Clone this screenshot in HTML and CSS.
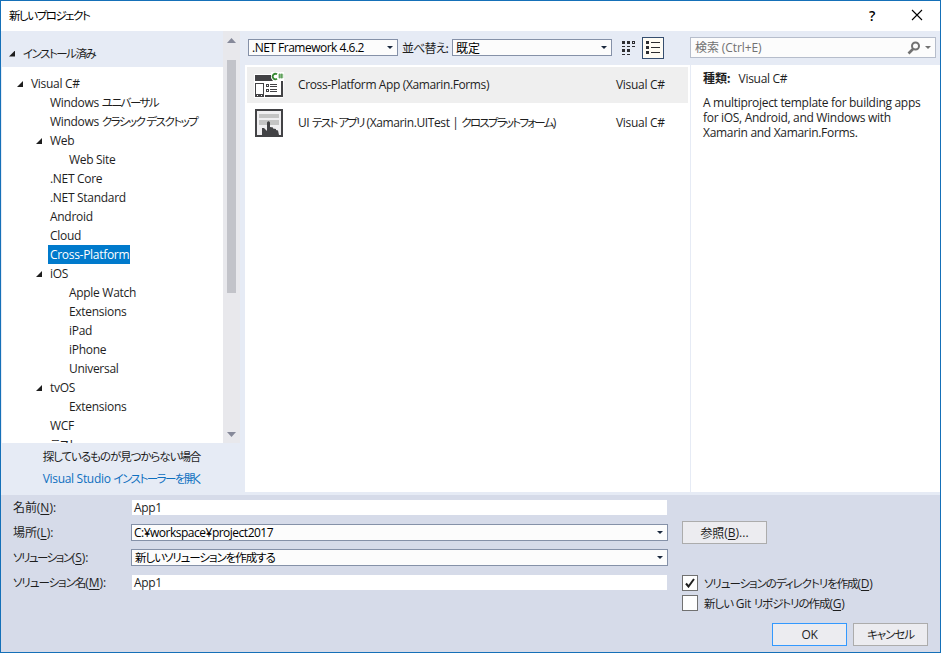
FILE: index.html
```html
<!DOCTYPE html>
<html lang="ja">

<head>
    <meta charset="UTF-8">
    <meta name="viewport" content="width=device-width, initial-scale=1.0">
    <title>新しいプロジェクト</title>
    <link rel="stylesheet" href="styles.css">
</head>

<body>
    <div class="dialog">
        <div class="titlebar">
            <span class="title kana">新しいプロジェクト</span>
            <span class="help">?</span>
            <svg class="close" width="12" height="12" viewBox="0 0 12 12"><path d="M1 1l10 10M11 1L1 11" stroke="#000" stroke-width="1.1"/></svg>
        </div>

        <div class="main">
            <div class="sidebar">
                <div class="browser">
                    <div class="tree-pane">
                        <div class="tree-header"><i class="arrow"></i><span class="kana">インストール済み</span></div>
                        <ul class="tree">
                            <li class="level1"><i class="arrow"></i><span>Visual C#</span></li>
                            <li class="level2"><span>Windows <span class="kana">ユニバーサル</span></span></li>
                            <li class="level2"><span>Windows <span class="kana">クラシック デスクトップ</span></span></li>
                            <li class="level2"><i class="arrow"></i><span>Web</span></li>
                            <li class="level3"><span>Web Site</span></li>
                            <li class="level2"><span>.NET Core</span></li>
                            <li class="level2"><span>.NET Standard</span></li>
                            <li class="level2"><span>Android</span></li>
                            <li class="level2"><span>Cloud</span></li>
                            <li class="level2 selected"><span>Cross-Platform</span></li>
                            <li class="level2"><i class="arrow"></i><span>iOS</span></li>
                            <li class="level3"><span>Apple Watch</span></li>
                            <li class="level3"><span>Extensions</span></li>
                            <li class="level3"><span>iPad</span></li>
                            <li class="level3"><span>iPhone</span></li>
                            <li class="level3"><span>Universal</span></li>
                            <li class="level2"><i class="arrow"></i><span>tvOS</span></li>
                            <li class="level3"><span>Extensions</span></li>
                            <li class="level2"><span>WCF</span></li>
                            <li class="level2"><span class="jp">テスト</span></li>
                        </ul>
                    </div>
                    <div class="scrollbar">
                        <svg width="9" height="5" viewBox="0 0 9 5"><path d="M0 5L4.500 0L9 5z" fill="#868999"/></svg>
                        <div class="track"><div class="thumb"></div></div>
                        <svg width="9" height="5" viewBox="0 0 9 5"><path d="M0 0h9L4.500 5z" fill="#868999"/></svg>
                    </div>
                </div>
                <div class="not-found">
                    <p class="hint jp">探しているものが見つからない場合</p>
                    <a class="link">Visual Studio <span class="kana">インストーラーを開く</span></a>
                </div>
            </div>

            <div class="templates">
                <div class="toolbar">
                    <div class="combo framework"><span>.NET Framework 4.6.2</span><i class="drop"></i></div>
                    <span class="sort-label">並べ替え:</span>
                    <div class="combo sort"><span class="kanji">既定</span><i class="drop"></i></div>
                    <svg class="tiles" width="14" height="14" viewBox="0 0 14 14" fill="#2d2d30" shape-rendering="crispEdges">
                        <path d="M0 0h3v3H0zM5 0h3v3H5zM10 0h3v3h-3zM0 8h3v3H0zM5 8h3v3H5z"/>
                        <path d="M0 5h3v1H0zM5 5h3v1H5zM10 5h3v1h-3zM0 13h3v1H0zM5 13h3v1H5z"/>
                        <path d="M11 1h1v1h-1z" fill="#e6ebf5"/>
                    </svg>
                    <div class="view-list">
                        <svg width="16" height="14" viewBox="0 0 16 14" fill="#2d2d30" shape-rendering="crispEdges">
                            <path d="M1 0h3v3H1zM1 5h3v3H1zM1 10h3v3H1zM6 1h9v1H6zM6 6h9v1H6zM6 11h9v1H6z"/>
                        </svg>
                    </div>
                </div>
                <div class="list">
                    <div class="template active">
                        <svg width="32" height="32" viewBox="0 0 32 32">
                            <path d="M1 5h17V3h13v9l-1 17H1z" fill="#fff"/>
                            <path d="M2 6h16v3l2 3H2z" fill="#424245"/>
                            <path d="M28 12h2v16H12v-2h16z" fill="#424245"/>
                            <path d="M2 14h9v14H2zM3 15v10h7V15zM4 26v1h1v-1zM8 26v1h1v-1z" fill="#424245" fill-rule="evenodd"/>
                            <path d="M13 15h3v3h-3zM14 16v1h1v-1zM17 15h7v1h-7zM17 17h7v1h-7zM13 20h3v3h-3zM14 21v1h1v-1zM17 20h7v1h-7zM17 22h7v1h-7z" fill="#424245" fill-rule="evenodd"/>
                            <path d="M24 5.300A2.700 2.700 0 1 0 24 9.700" fill="none" stroke="#388a34" stroke-width="1.800"/>
                            <path d="M26.800 4.500v5M28.800 4.500v5M25.300 6h5M25.300 8h5" stroke="#388a34" stroke-width=".9"/>
                        </svg>
                        <span class="name">Cross-Platform App (Xamarin.Forms)</span>
                        <span class="lang">Visual C#</span>
                    </div>
                    <div class="template">
                        <svg width="32" height="32" viewBox="0 0 32 32">
                            <path d="M2 2h28v28H2z" fill="#424245"/>
                            <path d="M4 4h24v24H4z" fill="#f0eff1"/>
                            <path d="M6 7h20v4H6zM6 13h20v5H6z" fill="#c4c4c4"/>
                            <path d="M14 28V15.500q1.500-2.500 3 0V20l3 .5v1l3 .5v1l2 .5 1 4.500zM9 28v-7h2l3 3v4z" fill="#424245"/>
                        </svg>
                        <span class="name">UI <span class="kana">テスト アプリ</span> (Xamarin.UITest | <span class="kana">クロスプラットフォーム</span>)</span>
                        <span class="lang">Visual C#</span>
                    </div>
                </div>
            </div>

            <div class="details">
                <div class="search-bar">
                    <div class="search">
                        <span class="placeholder"><span class="kanji">検索</span> (Ctrl+E)</span>
                        <svg width="14" height="14" viewBox="0 0 14 14"><circle cx="8.500" cy="5" r="3.500" fill="none" stroke="#717171" stroke-width="2"/><path d="M6 8L1.500 12.500" stroke="#717171" stroke-width="2.600"/></svg>
                        <i class="drop"></i>
                    </div>
                </div>
                <div class="info">
                    <p class="kind"><b class="kanji">種類:</b><span>Visual C#</span></p>
                    <p class="description">A multiproject template for building apps<br>for iOS, Android, and Windows with<br>Xamarin and Xamarin.Forms.</p>
                </div>
            </div>
        </div>

        <div class="footer">
            <div class="form">
                <label><span class="kanji">名前</span>(<u>N</u>):</label>
                <div class="textbox">App1</div>
                <label><span class="kanji">場所</span>(<u>L</u>):</label>
                <div class="combo path"><span>C:¥workspace¥project2017</span><i class="drop"></i></div>
                <label><span class="kana">ソリューション</span>(<u>S</u>):</label>
                <div class="combo"><span class="jp">新しいソリューションを作成する</span><i class="drop"></i></div>
                <label><span class="jp">ソリューション名</span>(<u>M</u>):</label>
                <div class="textbox">App1</div>
            </div>
            <div class="actions">
                <div class="button browse"><span class="kanji">参照</span>(<u>B</u>)...</div>
                <div class="check">
                    <span class="box"><svg width="10" height="10" viewBox="0 0 10 10"><path d="M1 5.500L3.500 8.500L9 1" fill="none" stroke="#1e1e1e" stroke-width="2"/></svg></span>
                    <span><span class="jp">ソリューションのディレクトリを作成</span>(<u>D</u>)</span>
                </div>
                <div class="check">
                    <span class="box"></span>
                    <span><span class="jp">新しい</span> Git <span class="jp">リポジトリの作成</span>(<u>G</u>)</span>
                </div>
                <div class="buttons">
                    <div class="button default">OK</div>
                    <div class="button"><span class="jp">キャンセル</span></div>
                </div>
            </div>
        </div>
    </div>
</body>

</html>
```
FILE: styles.css
```css
* {
    box-sizing: border-box;
}

body {
    margin: 0;
    font-family: "Open Sans", "Noto Sans CJK JP", sans-serif;
    font-size: 12px;
    line-height: 19px;
    letter-spacing: -0.3px;
    color: #1e1e1e;
    white-space: nowrap;
}

p,
ul {
    margin: 0;
    padding: 0;
    list-style: none;
}

svg {
    display: block;
    flex: none;
}

u {
    text-underline-offset: 2px;
}

/* Japanese text is set tighter, kana more than kanji */
.jp,
.kana,
.kanji {
    font-family: "Noto Sans CJK JP", sans-serif;
    font-feature-settings: "palt";
    line-height: 15px;
}

.jp,
.kana {
    font-size: 11.5px;
    word-spacing: 1px;
}

.jp {
    letter-spacing: -1.05px;
}

.kana {
    letter-spacing: -1.5px;
}

.kanji {
    letter-spacing: -0.1px;
}

.dialog {
    display: flex;
    flex-direction: column;
    width: 941px;
    height: 653px;
    border: 1px solid #1570b8;
    background: #e6ebf5;
    overflow: hidden;
}

.titlebar {
    display: flex;
    align-items: center;
    height: 30px;
    padding: 0 17px 2px 8px;
    background: #fff;
    color: #000;
}

.title {
    flex: 1;
}

.help {
    width: 42px;
    font-size: 14px;
    font-weight: 600;
}

.main {
    display: flex;
    height: 464px;
}

.sidebar {
    width: 244px;
}

.browser {
    display: flex;
    height: 412px;
}

.tree-pane {
    width: 222px;
    padding-left: 1px;
}

.tree-header {
    display: flex;
    align-items: center;
    height: 36px;
    padding: 9px 0 0 7px;
}

.tree-header .arrow {
    margin-right: 8px;
}

.arrow {
    flex: none;
    width: 6px;
    height: 6px;
    background: #1e1e1e;
    clip-path: polygon(100% 0, 100% 100%, 0 100%);
}

.tree {
    height: 376px;
    padding-top: 7px;
    background: #fff;
    overflow: hidden;
}

.tree li {
    display: flex;
    align-items: center;
    height: 19px;
}

.tree .arrow {
    margin: 1px 6px 0 -12px;
}

.tree li > span {
    padding: 0 2px;
}

.level1 {
    padding-left: 27px;
}

.level2 {
    padding-left: 46px;
}

.level3 {
    padding-left: 65px;
}

.tree .selected > span {
    padding-right: 1px;
    background: #007acc;
    color: #fff;
}

.scrollbar {
    display: flex;
    flex-direction: column;
    align-items: center;
    width: 17px;
    padding: 7px 0 6px;
    background: #e8e8ec;
}

.track {
    flex: 1;
    padding-top: 17px;
}

.thumb {
    width: 9px;
    height: 233px;
    background: #c2c3c9;
}

.not-found {
    padding: 6px 3px 0 0;
    text-align: center;
    line-height: 21px;
}

.hint {
    padding-bottom: 4px;
}

.link {
    color: #0e70c0;
}

.templates {
    width: 445px;
}

.toolbar {
    display: flex;
    align-items: center;
    height: 34px;
    padding: 0 0 1px 3px;
}

.combo {
    display: flex;
    align-items: center;
    justify-content: space-between;
    height: 17px;
    padding: 0 4px 0 3px;
    border: 1px solid #8591a8;
    background: #fcfcfc;
    color: #000;
}

.drop {
    flex: none;
    width: 6px;
    height: 3px;
    background: #1b293e;
    clip-path: polygon(0 0, 100% 0, 50% 100%);
}

.framework {
    width: 150px;
    letter-spacing: -0.5px;
}

.path {
    padding-left: 2px;
    letter-spacing: -0.5px;
}

.sort-label {
    width: 54px;
    padding-left: 4px;
    font-family: "Noto Sans CJK JP", sans-serif;
    font-feature-settings: "palt";
    letter-spacing: -0.9px;
}

.sort {
    width: 160px;
}

.tiles {
    margin: 0 6px 0 10px;
}

.view-list {
    display: flex;
    align-items: center;
    justify-content: center;
    width: 22px;
    height: 22px;
    border: 1px solid #364e6f;
    background: #fffcf4;
}

.list {
    height: 427px;
    padding: 2px;
    background: #fff;
}

.template {
    display: flex;
    align-items: center;
    height: 36px;
    margin-bottom: 2px;
    padding: 0 22px 0 6px;
}

.active {
    background: #efefef;
}

.name {
    flex: 1;
    padding: 0 0 1px 13px;
    letter-spacing: -0.38px;
}

.name .kana {
    letter-spacing: -1.75px;
}

.lang {
    width: 50px;
    padding-bottom: 1px;
}

.details {
    width: 250px;
}

.search-bar {
    height: 34px;
    padding: 6px 4px 0 0;
}

.search {
    display: flex;
    align-items: center;
    height: 21px;
    padding: 0 4px;
    border: 1px solid #b6bdcb;
    background: #fcfcfc;
}

.placeholder {
    flex: 1;
    color: #717171;
    letter-spacing: -0.1px;
}

.search .drop {
    margin-left: 4px;
    background: #717171;
}

.info {
    height: 427px;
    padding: 4px 0 0 12px;
    border-left: 1px solid #e6ebf5;
    background: #fff;
}

.kind b {
    margin-right: 8px;
}

.description {
    padding-top: 7px;
    line-height: 15px;
}

.footer {
    display: flex;
    flex: 1;
    background: #d6dbe9;
}

.form {
    display: grid;
    grid-template-columns: 118px 537px;
    grid-auto-rows: 25px;
    align-items: center;
    width: 667px;
    padding-left: 12px;
}

.form label {
    letter-spacing: 0;
}

.textbox {
    height: 15px;
    margin: 0 1px;
    padding-left: 2px;
    background: #fff;
    line-height: 15px;
}

.actions {
    width: 272px;
    padding: 26px 0 0 14px;
}

.button {
    display: flex;
    align-items: center;
    justify-content: center;
    width: 75px;
    height: 23px;
    border: 1px solid #acacac;
    background: #ececf0;
}

.browse {
    width: 85px;
    margin-bottom: 29px;
    letter-spacing: 0;
}

.default {
    border-color: #3399ff;
}

.check {
    display: flex;
    align-items: center;
    height: 20px;
}

.box {
    display: flex;
    align-items: center;
    justify-content: center;
    width: 16px;
    height: 16px;
    margin-right: 6px;
    border: 1px solid #717171;
    background: #fefefe;
}

.buttons {
    display: flex;
    gap: 6px;
    padding: 10px 0 0 90px;
}
```
